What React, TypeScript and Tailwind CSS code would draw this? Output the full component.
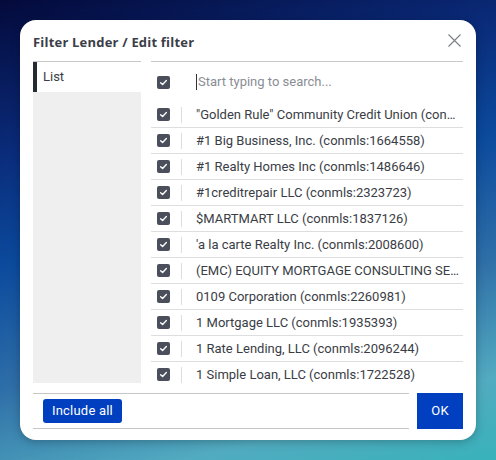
import React from "react";

const items = [
  '"Golden Rule" Community Credit Union (conmls:1234567)',
  "#1 Big Business, Inc. (conmls:1664558)",
  "#1 Realty Homes Inc (conmls:1486646)",
  "#1creditrepair LLC (conmls:2323723)",
  "$MARTMART LLC (conmls:1837126)",
  "'a la carte Realty Inc. (conmls:2008600)",
  "(EMC) EQUITY MORTGAGE CONSULTING SERVICES (conmls:1)",
  "0109 Corporation (conmls:2260981)",
  "1 Mortgage LLC (conmls:1935393)",
  "1 Rate Lending, LLC (conmls:2096244)",
  "1 Simple Loan, LLC (conmls:1722528)",
  "1st Choice Lending (conmls:1111111)",
];

function Check() {
  return (
    <span className="flex h-[13px] w-[13px] shrink-0 items-center justify-center rounded-[2px] bg-[#4a4f5b]">
      <svg width="9" height="9" viewBox="0 0 10 10" fill="none">
        <path d="M1.8 5.2 L4 7.3 L8.2 2.8" stroke="white" strokeWidth="1.5" strokeLinecap="round" strokeLinejoin="round" />
      </svg>
    </span>
  );
}

export default function App() {
  return (
    <div className="h-[460px] w-[496px] overflow-hidden bg-[linear-gradient(165deg,#040a3b_0%,#0a2a78_25%,#0b4a9d_45%,#2f6fa8_66%,#52abc0_86%,#38b2bb_100%)] pt-[20px] pl-[20px] font-['Roboto',sans-serif]">
      <div className="flex h-[420px] w-[456px] flex-col rounded-[16px] bg-white px-[13px] shadow-[0_2px_10px_rgba(0,0,0,0.25)]">
        <div className="flex h-[41px] items-center justify-between pt-[4px]">
          <span className="font-['Open_Sans',sans-serif] text-[13px] font-bold tracking-[0.2px] text-[#3b3e47]">
            Filter Lender / Edit filter
          </span>
          <svg width="13" height="13" viewBox="0 0 13 13" className="mr-[2px] mb-[4px]">
            <path d="M0.5 0.5 L12.5 12.5 M12.5 0.5 L0.5 12.5" stroke="#7a7d85" strokeWidth="1.1" />
          </svg>
        </div>
        <div className="flex h-[322px] gap-[10px]">
          <div className="flex w-[108px] flex-col border-t border-[#c9c9c9] bg-[#efefef]">
            <div className="flex h-[30px] items-center border-l-[4px] border-[#262a33] bg-white pl-[6px] text-[13px] text-[#3a3d45]">
              List
            </div>
          </div>
          <div className="flex flex-1 flex-col overflow-hidden border-t border-[#c9c9c9]">
            <div className="flex h-[40px] shrink-0 items-center pl-[6px]">
              <Check />
              <span className="ml-[26px] border-l border-[#333] pl-[1px] text-[13px] leading-[16px] text-[#8a8d94]">
                Start typing to search...
              </span>
            </div>
            <div className="flex-1 overflow-hidden">
              {items.map((t, i) => (
                <div key={i} className="flex h-[26px] items-center border-b border-[#dedede] pl-[6px]">
                  <Check />
                  <span className="ml-[11px] h-[16px] w-px bg-[#dcdcdc]" />
                  <span className="ml-[14px] w-[266px] truncate text-[13px] text-[#3a3d45]">{t}</span>
                </div>
              ))}
            </div>
          </div>
        </div>
        <div className="mt-[10px] flex h-[36px] gap-[8px]">
          <div className="flex flex-1 items-center border-y border-[#c6c6c6] pl-[10px]">
            <button className="h-[24px] rounded-[3px] bg-[#0040c0] px-[9px] text-[13px] tracking-[0.2px] text-white">
              Include all
            </button>
          </div>
          <button className="h-[36px] w-[46px] bg-[#0040c0] text-[13px] tracking-[0.3px] text-white">OK</button>
        </div>
      </div>
    </div>
  );
}
